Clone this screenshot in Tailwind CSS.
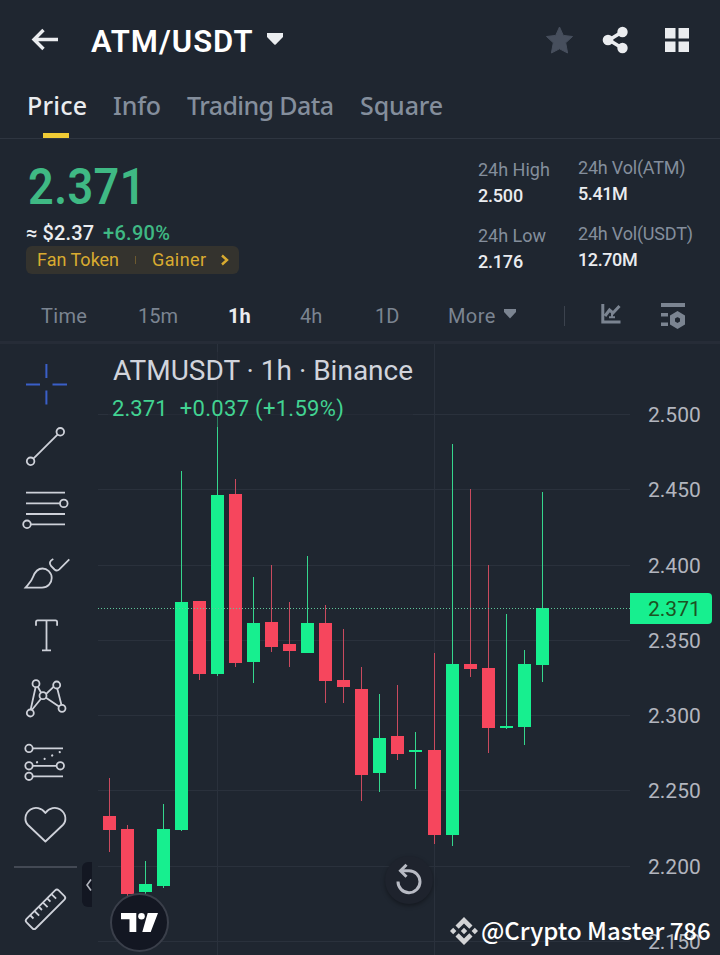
<!DOCTYPE html>
<html lang="en">
  <head>
    <meta charset="UTF-8" />
    <meta name="viewport" content="width=device-width, initial-scale=1.0" />
    <title>ATM/USDT</title>
    <script src="https://cdn.jsdelivr.net/npm/@tailwindcss/browser@4"></script>
  </head>
  <body class="bg-[#1f2630] font-['Roboto',sans-serif] text-[#848e9c]">
    <div class="w-[720px] h-[955px] overflow-hidden flex flex-col">
      <!-- Header -->
      <header class="h-20 shrink-0 flex items-center text-[#eaecef]">
        <svg class="ml-[31px] w-7 h-6" viewBox="0 0 28 24" fill="none" stroke="currentColor" stroke-width="3.4">
          <path d="M27 11.5H3M12.5 2L3 11.5L12.5 21" />
        </svg>
        <h1 class="ml-8 w-[162px] pt-[3px] text-[31px] leading-10 font-semibold tracking-[1px] text-white whitespace-nowrap">ATM/USDT</h1>
        <svg class="ml-3.5 w-4 h-3 -mt-0.5" viewBox="0 0 16 12" fill="currentColor">
          <path d="M0 0H16V4L8.7 11.5Q8 12 7.3 11.5L0 4Z" />
        </svg>
        <svg class="ml-[263px] w-[27px] h-7" viewBox="0 0 27 28" fill="#474f5d">
          <path d="M13.5 1L17.3 9.4L26.5 10.5L19.7 16.8L21.6 27L13.5 22.8L5.4 27L7.3 16.8L.5 10.5L9.7 9.4Z" stroke="#474f5d" stroke-linejoin="round" />
        </svg>
        <svg class="ml-[29px] w-[27px] h-7" viewBox="0 0 27 28" fill="currentColor">
          <path d="M7 14L20 6M7 14L20 22" stroke="currentColor" stroke-width="3.6" />
          <circle cx="6" cy="14" r="5.3" />
          <circle cx="20.5" cy="6" r="5.2" />
          <circle cx="20.5" cy="22" r="5.2" />
        </svg>
        <svg class="ml-9 w-6 h-6" viewBox="0 0 24 24" fill="currentColor">
          <path d="M0 0H10.5V10.5H0ZM13.5 0H24V10.5H13.5ZM0 13.5H10.5V24H0ZM13.5 13.5H24V24H13.5Z" />
        </svg>
      </header>
      <!-- Tabs -->
      <nav class="h-[59px] shrink-0 flex pl-[27px] pt-[5px] border-b border-[#2e3540] text-[25px] leading-10 font-medium whitespace-nowrap font-['Noto_Sans',sans-serif]">
        <a class="w-[86px] flex flex-col text-[#eaecef]">
          <span class="tracking-[0.2px]">Price</span>
          <span class="mt-2 ml-4 w-[26px] h-[5px] bg-[#f0cb35]"></span>
        </a>
        <a class="w-[74px] tracking-[-0.2px]">Info</a>
        <a class="w-[173px] tracking-[-0.6px]">Trading Data</a>
        <a class="tracking-[-0.1px]">Square</a>
      </nav>
      <!-- Price summary -->
      <section class="h-[151px] shrink-0 flex">
        <div class="w-[478px] pl-[26px] pt-5">
          <p class="ml-0.5 h-[60px] text-[50px] leading-[56px] font-semibold text-[#3fb984] origin-left scale-x-90 tracking-[0.5px] whitespace-nowrap">2.371</p>
          <p class="h-[27px] flex gap-2 text-xl leading-[28px] font-medium whitespace-nowrap">
            <span class="text-[#eaecef] w-[69px] tracking-[0.1px]">≈ $2.37</span>
            <span class="text-[#3fb984] tracking-[0.3px]">+6.90%</span>
          </p>
          <div class="w-[213px] h-7 rounded-md bg-[#34332e] flex items-center pl-[11px] pb-px text-[18px] text-[#d9ab30] whitespace-nowrap">
            <span class="w-24">Fan Token</span>
            <span class="ml-0.5 w-px h-2 bg-[#6d5a2f]"></span>
            <span class="ml-4 w-[69px] tracking-[0.4px]">Gainer</span>
            <svg class="w-2 h-3" viewBox="0 0 8 12" fill="none" stroke="currentColor" stroke-width="2.4"><path d="M1 1.5L6 6L1 10.5" /></svg>
          </div>
        </div>
        <dl class="w-[100px] pt-[18px] text-[18px] leading-[26px] whitespace-nowrap">
          <dt>24h High</dt>
          <dd class="text-[#eaecef] font-medium tracking-[-0.2px]">2.500</dd>
          <dt class="mt-3.5">24h Low</dt>
          <dd class="text-[#eaecef] font-medium tracking-[-0.2px]">2.176</dd>
        </dl>
        <dl class="pt-4 text-[18px] leading-[26px] whitespace-nowrap">
          <dt class="tracking-[-0.2px]">24h Vol(ATM)</dt>
          <dd class="text-[#eaecef] font-medium tracking-[-0.4px]">5.41M</dd>
          <dt class="mt-3.5 tracking-[-0.2px]">24h Vol(USDT)</dt>
          <dd class="text-[#eaecef] font-medium tracking-[-0.4px]">12.70M</dd>
        </dl>
      </section>
      <!-- Intervals -->
      <div class="h-[54px] shrink-0 flex items-center pl-[41px] border-b-3 border-[#262c37] text-[20px] whitespace-nowrap text-[#7b8491]">
        <span class="w-[97px] tracking-[0.3px]">Time</span>
        <span class="w-[90px]">15m</span>
        <span class="w-[72px] font-bold text-[#eaecef]">1h</span>
        <span class="w-[75px]">4h</span>
        <span class="w-[73px]">1D</span>
        <span class="w-14 tracking-[0.4px]">More</span>
        <svg class="w-3 h-2.5 -mt-1" viewBox="0 0 12 10" fill="currentColor"><path d="M0 0H12V3L6 9.5L0 3Z" /></svg>
        <span class="ml-12 w-px h-5 bg-[#3b424d]"></span>
        <svg class="ml-9 w-5 h-5 -mt-1" viewBox="0 0 20 20" fill="none" stroke="currentColor" stroke-width="3">
          <path d="M1.8 0V18H19.5M4 12L8.5 6L12 9L18.5 2" />
          <path d="M8 13.2H14M11 9V13" stroke-width="2" />
        </svg>
        <svg class="ml-[39px] w-[26px] h-[26px]" viewBox="0 0 26 26">
          <path d="M1 0H25V4H1ZM1 10H8V13.5H1ZM1 19.5H8V23H1Z" fill="currentColor" />
          <path d="M17.5 11L22.5 14V20L17.5 23L12.5 20V14Z" fill="none" stroke="currentColor" stroke-width="5" />
        </svg>
      </div>
      <!-- Chart -->
      <main class="relative h-[611px] flex">
        <aside class="w-[98px] pt-2 pl-5 shrink-0 flex flex-col">
          <svg class="w-[52px] h-[63px] shrink-0" viewBox="0 0 52 63" fill="none" stroke="#3a5fc8" stroke-width="2">
            <path d="M26.4 12V26M26.4 38.5V52.5M6 32.4H20M32.5 32.4H47" />
          </svg>
          <svg class="w-[52px] h-[63px] shrink-0" viewBox="0 0 52 63" fill="none" stroke="#ced1d9" stroke-width="1.8">
            <path d="M13.4 43.6L37.5 19.6" />
            <circle cx="10.6" cy="46.3" r="3.8" />
            <circle cx="40.3" cy="16.8" r="3.8" />
          </svg>
          <svg class="w-[52px] h-[63px] shrink-0" viewBox="0 0 52 63" fill="none" stroke="#ced1d9" stroke-width="1.8">
            <path d="M6 14.7H45M6 25.3H40M6 36H45M11 46.3H45" />
            <circle cx="43.8" cy="25.4" r="3.8" />
            <circle cx="7" cy="46.3" r="3.8" />
          </svg>
          <svg class="w-[52px] h-[63px] shrink-0" viewBox="0 0 52 63" fill="none" stroke="#ced1d9" stroke-width="1.8">
            <path d="M5.5 46.7H22C28 46.7 31.7 42 31.7 37C31.7 31.5 27 27.5 22.5 27.5C17 27.5 14.5 32 13 36C11.5 40.5 9 42.5 5.5 46.7Z" />
            <path d="M33.3 18C29.5 20 29 22.5 31 25L34.5 28.5C36 29.8 37.8 29.7 39.3 28.3L49.3 18.3" />
          </svg>
          <svg class="w-[52px] h-[63px] shrink-0" viewBox="0 0 52 63" fill="none" stroke="#ced1d9" stroke-width="1.8">
            <path d="M16 21.7V18Q16 16.4 17.6 16.4H35.5Q37.1 16.4 37.1 18V21.7M26.5 16.4V46.4M22 46.4H31" />
          </svg>
          <svg class="w-[52px] h-[63px] shrink-0" viewBox="0 0 52 63" fill="none" stroke="#ced1d9" stroke-width="1.8">
            <path d="M10.7 42.4L15.6 20.3M17.8 19.8L21 25.6M26.2 26.9L33.5 19.9M37.3 21.6L41.4 37.7M26 30.7L39 39.4M12 42.8L21 31.7" />
            <circle cx="16" cy="16.7" r="3.5" />
            <circle cx="36.7" cy="18" r="3.5" />
            <circle cx="23" cy="28.7" r="3.5" />
            <circle cx="42" cy="41.3" r="3.5" />
            <circle cx="10.3" cy="46" r="3.5" />
          </svg>
          <svg class="w-[52px] h-[63px] shrink-0" viewBox="0 0 52 63" fill="none" stroke="#ced1d9" stroke-width="1.8">
            <path d="M13 18.4H43M13 35.8H36.5M13 46.3H43" />
            <path d="M17 32.3L40 22" stroke-width="2.2" stroke-linecap="round" stroke-dasharray="0.1 8.2" />
            <circle cx="9" cy="18.4" r="3.7" />
            <circle cx="9" cy="35.8" r="3.7" />
            <circle cx="40.3" cy="35.8" r="3.7" />
            <circle cx="9" cy="46.3" r="3.7" />
          </svg>
          <svg class="w-[52px] h-[63px] shrink-0" viewBox="0 0 52 63" fill="none" stroke="#ced1d9" stroke-width="1.8" stroke-linejoin="round">
            <path d="M25.4 20C21.5 14.5 15 13.5 10.5 16.5C4.5 20.5 4 28 8 32L25.4 48.5L42.8 32C46.8 28 46.3 20.5 40.3 16.5C35.8 13.5 29.3 14.5 25.4 20Z" />
          </svg>
          <hr class="mt-2.5 -ml-1.5 w-[63px] shrink-0 border-0 h-0.5 bg-[#434954]" />
          <svg class="mt-4 w-[52px] h-[52px] shrink-0" viewBox="0 0 52 52" fill="none" stroke="#ced1d9" stroke-width="1.8">
            <g transform="translate(25.5 25.3) rotate(-45)">
              <rect x="-22.7" y="-6.6" width="45.4" height="13.2" rx="2.5" />
              <path d="M-15 -6.6V-2M-9 -6.6V0M-3 -6.6V-2M3 -6.6V0M9 -6.6V-2M15 -6.6V0" />
            </g>
          </svg>
        </aside>
        <svg class="w-[532px] h-[611px] shrink-0" viewBox="98 344 532 611" shape-rendering="crispEdges">
          <g id="grid" fill="#2a313c"></g>
          <g id="candles"></g>
          <path d="M98 608.5H630" stroke="#5fc79a" stroke-dasharray="1 2" />
        </svg>
        <div class="w-[90px] shrink-0 pt-[34px] pl-[18px] flex flex-col text-[21px] leading-[75.3px] text-[#b2b5be]">
          <span class="h-[75.3px]">2.500</span>
          <span class="h-[75.3px]">2.450</span>
          <span class="h-[75.3px]">2.400</span>
          <span class="h-[75.3px]">2.350</span>
          <span class="h-[75.3px]">2.300</span>
          <span class="h-[75.3px]">2.250</span>
          <span class="h-[75.3px]">2.200</span>
          <span class="h-[75.3px]">2.150</span>
        </div>

        <!-- Last price tag -->
        <div class="absolute left-[630px] top-[249px] w-[82px] h-[31px] rounded-r bg-[#17ef8f] pl-[18px] text-[21px] leading-[32px] text-[#1d5222]">2.371</div>
        <!-- Legend -->
        <div class="absolute left-[108px] top-2 bg-[#1f2630]/50 pl-[5px] whitespace-nowrap">
          <p class="h-9 text-[28px] leading-[37px] text-[#d1d4dc]">ATMUSDT · 1h · Binance</p>
          <p class="-ml-px h-[39px] flex gap-3 text-[22px] leading-[41px] text-[#42d392]"><span class="tracking-[0.1px]">2.371</span><span class="tracking-[0.3px]">+0.037 (+1.59%)</span></p>
        </div>
        <!-- Toolbar toggle -->
        <div class="absolute left-[82px] top-[518px] w-[10px] h-[45px] rounded-l-md bg-[#131722] flex items-center justify-end">
          <svg class="w-[6px] h-3" viewBox="0 0 6 12" fill="none" stroke="#b2b5be" stroke-width="1.6"><path d="M5 .5L1 6L5 11.5" /></svg>
        </div>
        <!-- Chart logo -->
        <div class="absolute left-[110px] top-[549px] size-[59px] rounded-full border-2 border-[#3a3f4a] bg-[#131722] flex items-center justify-center">
          <svg class="w-[37px] h-[19px]" viewBox="0 0 37 19" fill="#fff">
            <path d="M0 0H15.3V19H8.5V6.3H0ZM26.7 0H37L29.7 19H21.3Z" />
            <circle cx="20.5" cy="3.3" r="3.3" />
          </svg>
        </div>
        <!-- Reset chart -->
        <div class="absolute left-[385px] top-[512px] size-12 rounded-full bg-[#1e232d] shadow-[0_2px_4px_rgba(0,0,0,0.35)]">
          <svg class="size-12" viewBox="0 0 48 48" fill="none" stroke="#b8bbc4" stroke-width="3">
            <path d="M13 25.5A11 11 0 1 0 24 14.7H16" />
            <path d="M21.5 8.7L15.5 14.7L21.5 20.7" />
          </svg>
        </div>
        <!-- Author -->
        <div class="absolute left-[450px] top-[569px] h-9 flex items-center whitespace-nowrap">
          <svg class="size-7" viewBox="0 0 28 28" fill="#d3d4d6">
            <path d="M14 0L22.5 8.5L19.3 11.7L14 6.4L8.7 11.7L5.5 8.5ZM14 28L22.5 19.5L19.3 16.3L14 21.6L8.7 16.3L5.5 19.5ZM3.2 10.8L6.4 14L3.2 17.2L0 14ZM24.8 10.8L28 14L24.8 17.2L21.6 14ZM14 10.8L17.2 14L14 17.2L10.8 14Z" />
          </svg>
          <span class="ml-[3px] -mt-[3px] text-[24px] leading-9 font-medium text-white font-['Noto_Sans_CJK_SC',sans-serif]">@Crypto Master 786</span>
        </div>
      </main>
    </div>
    <script>
      // x center, high, body top, body bottom, low, direction
      const candles = [
        [109, 778, 816, 830, 852, 'down'],
        [127, 825, 829, 894, 897, 'down'],
        [145, 861, 884, 892, 895, 'up'],
        [163, 804, 829, 886, 888, 'up'],
        [181, 471, 602, 830, 831, 'up'],
        [199, 601, 601, 674, 680, 'down'],
        [217, 416, 495, 674, 676, 'up'],
        [235, 479, 494, 663, 667, 'down'],
        [253, 577, 623, 662, 683, 'up'],
        [271, 565, 622, 647, 652, 'down'],
        [289, 602, 644, 651, 667, 'down'],
        [307, 556, 623, 653, 653, 'up'],
        [325, 605, 623, 681, 703, 'down'],
        [343, 629, 680, 687, 703, 'down'],
        [361, 667, 689, 775, 801, 'down'],
        [379, 694, 738, 773, 792, 'up'],
        [397, 685, 736, 754, 760, 'down'],
        [415, 732, 750, 752, 789, 'up'],
        [434, 653, 750, 835, 844, 'down'],
        [452, 444, 664, 835, 846, 'up'],
        [470, 489, 664, 669, 677, 'down'],
        [488, 565, 668, 728, 753, 'down'],
        [506, 614, 726, 728, 729, 'up'],
        [524, 650, 664, 727, 745, 'up'],
        [542, 492, 608, 665, 682, 'up']
      ];
      const colors = { up: ['#17ef8f', '#35d68d'], down: ['#f6465d', '#c94a5e'] };

      document.getElementById('grid').innerHTML =
        [414, 489, 565, 640, 715, 790, 866, 941].map(y => `<rect x="98" y="${y}" width="532" height="1" />`).join('') +
        [217, 434].map(x => `<rect x="${x}" y="344" width="1" height="611" />`).join('');

      document.getElementById('candles').innerHTML = candles.map(([x, high, top, bottom, low, dir]) => {
        const [body, wick] = colors[dir];
        return `<rect x="${x}" y="${high}" width="1" height="${low - high}" fill="${wick}" />` +
          `<rect x="${x - 6}" y="${top}" width="13" height="${bottom - top}" fill="${body}" />`;
      }).join('');
    </script>
  </body>
</html>
